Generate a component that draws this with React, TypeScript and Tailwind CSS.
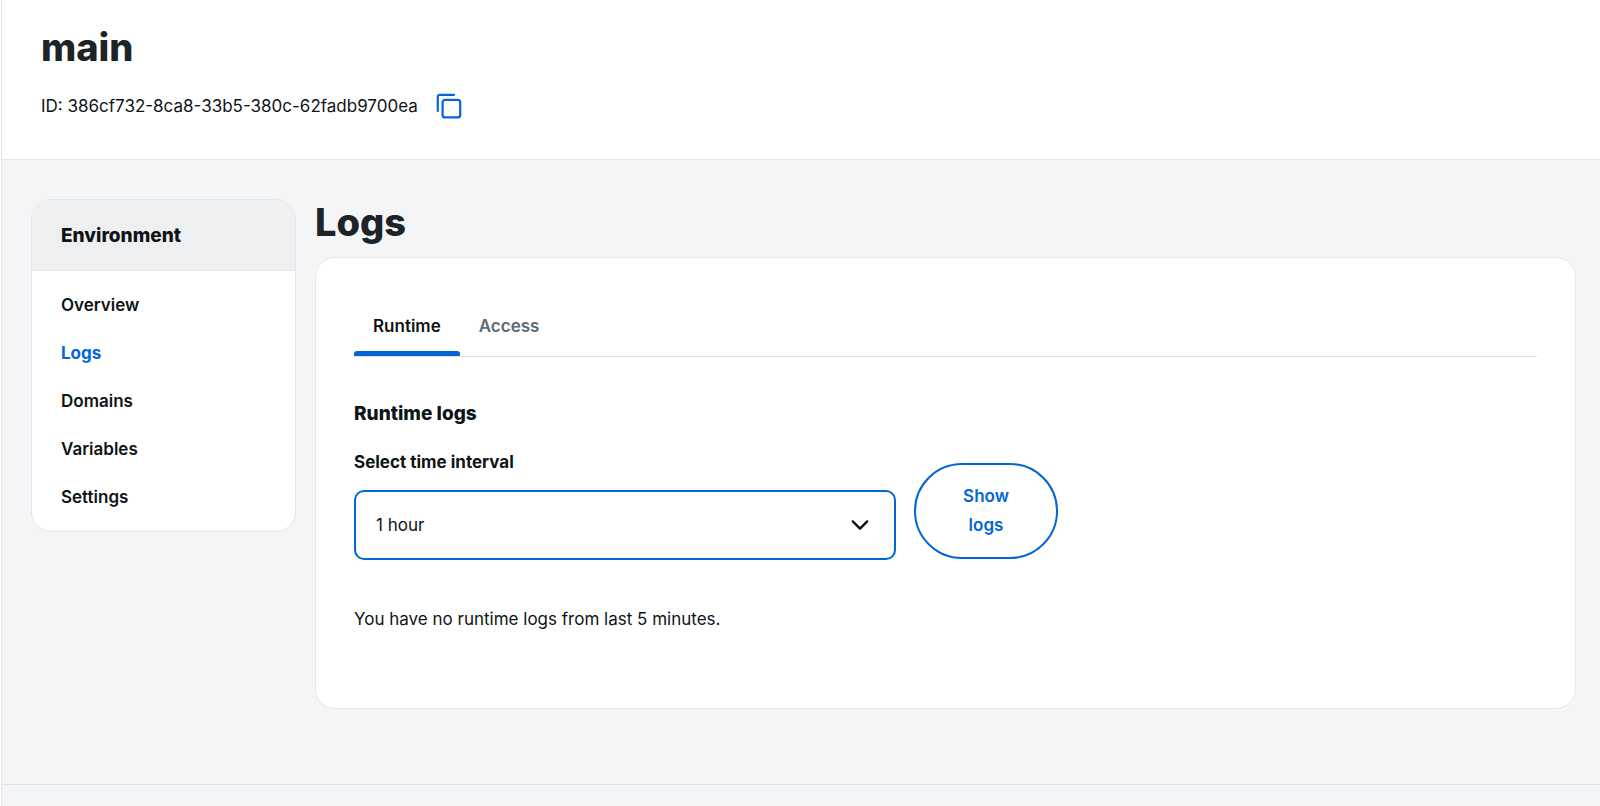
import { useState } from "react";

const navItems = ["Overview", "Logs", "Domains", "Variables", "Settings"];
const tabs = ["Runtime", "Access"];
const intervals = ["5 minutes", "15 minutes", "1 hour", "6 hours", "24 hours"];

function CopyIcon() {
  return (
    <svg width="26" height="26" viewBox="0 0 26 26" fill="none" stroke="#0366d6" strokeWidth="2.2" strokeLinecap="round" aria-hidden="true">
      <path d="M1.8 18V3.8a2 2 0 0 1 2-2H18" />
      <rect x="6.6" y="6.8" width="17.6" height="17.6" rx="2.5" />
    </svg>
  );
}

function PageHeader() {
  return (
    <header className="border-b border-[#e4e7e9] bg-white px-[39px] pt-6 pb-[35px]">
      <h1 className="text-[38px] leading-[47px] font-extrabold text-[#1d2427]">main</h1>
      <div className="mt-[17px] flex items-center gap-[17px]">
        <p className="text-[17px] leading-9">ID: 386cf732-8ca8-33b5-380c-62fadb9700ea</p>
        <button type="button" aria-label="Copy ID" className="p-px">
          <CopyIcon />
        </button>
      </div>
    </header>
  );
}

function Sidebar() {
  return (
    <nav aria-label="Environment" className="w-[265px] shrink-0 overflow-hidden rounded-[20px] border border-[#e2e6e8] bg-white">
      <h2 className="border-b border-[#e2e6e8] bg-[#eeeff1] px-[29px] pt-px text-[19px] leading-[69px] font-extrabold">Environment</h2>
      <ul className="px-[29px] py-[10px]">
        {navItems.map((item) => (
          <li key={item}>
            <a
              href={"#" + item.toLowerCase()}
              className={item === "Logs" ? "block text-[17px] leading-12 font-bold text-[#0366d6]" : "block text-[17px] leading-12 font-semibold"}
            >
              {item}
            </a>
          </li>
        ))}
      </ul>
    </nav>
  );
}

function LogsCard() {
  const [tab, setTab] = useState("Runtime");
  const [interval, setInterval] = useState("1 hour");
  return (
    <section className="rounded-[20px] border border-[#e4e9eb] bg-white px-[38px] pt-12 pb-[75px]">
      <div role="tablist" className="flex border-b border-[#dfe3e5]">
        {tabs.map((name) => (
          <button
            key={name}
            type="button"
            role="tab"
            aria-selected={tab === name}
            onClick={() => setTab(name)}
            className="flex flex-col text-[17px] leading-10 font-semibold text-[#5a6b75] aria-selected:text-[#0e1416]"
          >
            <span className="px-[19px] pb-[5px]">{name}</span>
            <span className={tab === name ? "h-[5px] w-full rounded-t-[3px] bg-[#0366d6]" : "h-[5px] w-full"} />
          </button>
        ))}
      </div>
      <h3 className="mt-[43px] text-[19px] leading-7 font-extrabold">{tab} logs</h3>
      <div className="mt-[35px] flex items-start gap-[18px]">
        <div className="-mt-[15px] flex w-[542px] flex-col gap-[14px]">
          <label htmlFor="interval" className="text-[17px] leading-7 font-bold">
            Select time interval
          </label>
          <div className="grid items-center">
            <select
              id="interval"
              value={interval}
              onChange={(e) => setInterval(e.target.value)}
              className="col-start-1 row-start-1 h-[70px] w-full appearance-none rounded-[10px] border-2 border-[#0366d6] bg-white px-5 pt-[2px] text-[17px]"
            >
              {intervals.map((value) => (
                <option key={value}>{value}</option>
              ))}
            </select>
            <svg className="pointer-events-none col-start-1 row-start-1 mr-[27px] justify-self-end" width="18" height="12" viewBox="0 0 18 12" fill="none" stroke="#0b0f11" strokeWidth="2.4" strokeLinecap="round" strokeLinejoin="round" aria-hidden="true">
              <path d="M1.8 2.4 9 9.6 16.2 2.4" />
            </svg>
          </div>
        </div>
        <button type="button" className="w-36 rounded-[48px] border-2 border-[#0366d6] px-10 py-[17px] text-[17px] leading-[29px] font-semibold text-[#0366d6]">
          Show logs
        </button>
      </div>
      <p className="mt-[45px] text-[17px] leading-7">You have no runtime logs from last 5 minutes.</p>
    </section>
  );
}

export default function App() {
  return (
    <div className="flex min-h-screen flex-col border-l border-white bg-[#f4f5f7] font-['Inter',sans-serif] text-[#0e1416]">
      <div className="flex grow flex-col border-l border-[#e4e7e9]">
        <PageHeader />
        <div className="flex items-start gap-[19px] pt-[39px] pr-6 pb-[75px] pl-[29px]">
          <Sidebar />
          <main className="min-w-0 grow">
            <h1 className="pb-[11px] text-[38px] leading-[47px] font-extrabold text-[#1d2427]">Logs</h1>
            <LogsCard />
          </main>
        </div>
        <footer className="border-t border-[#e0e3e6]" />
      </div>
    </div>
  );
}
